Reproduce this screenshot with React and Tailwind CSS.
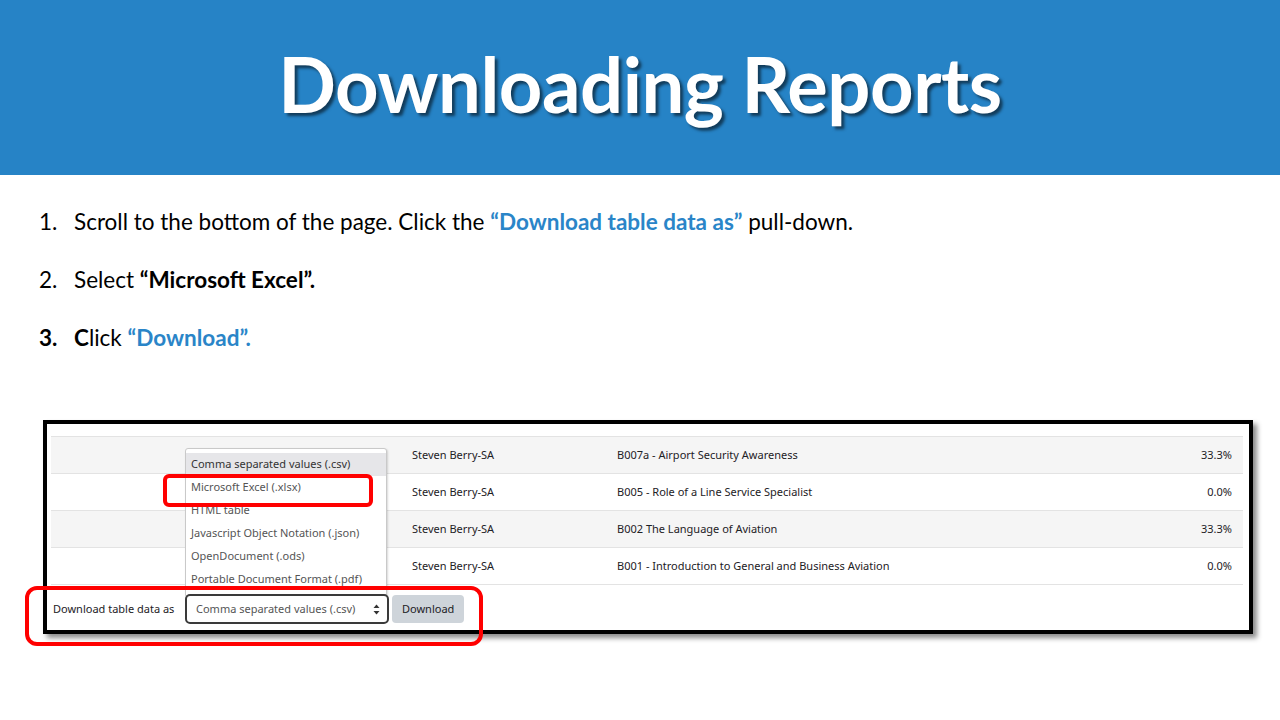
import React from "react";

const rows = [
  { name: "Steven Berry-SA", course: "B007a - Airport Security Awareness", pct: "33.3%", bg: "bg-[#f5f5f5]" },
  { name: "Steven Berry-SA", course: "B005 - Role of a Line Service Specialist", pct: "0.0%", bg: "bg-white" },
  { name: "Steven Berry-SA", course: "B002 The Language of Aviation", pct: "33.3%", bg: "bg-[#f5f5f5]" },
  { name: "Steven Berry-SA", course: "B001 - Introduction to General and Business Aviation", pct: "0.0%", bg: "bg-white" },
];

const options = [
  "Comma separated values (.csv)",
  "Microsoft Excel (.xlsx)",
  "HTML table",
  "Javascript Object Notation (.json)",
  "OpenDocument (.ods)",
  "Portable Document Format (.pdf)",
];

export default function App() {
  return (
    <div className="relative w-[1280px] h-[720px] overflow-hidden bg-white font-['Lato',sans-serif]">
      <header className="h-[175px] bg-[#2683c6] flex items-center justify-center">
        <h1 className="text-white font-bold text-[76px] leading-none tracking-[-0.5px] pb-[8px] [text-shadow:3px_3px_3px_rgba(0,0,0,0.55)]">
          Downloading Reports
        </h1>
      </header>

      <ol className="pt-[33px] pl-[39px] text-[22.5px] text-black leading-[28px] flex flex-col gap-[30px]">
        <li className="flex">
          <span className="w-[35px]">1.</span>
          <span>
            Scroll to the bottom of the page. Click the{" "}
            <b className="text-[#2a85c8] font-bold">“Download table data as”</b> pull-down.
          </span>
        </li>
        <li className="flex">
          <span className="w-[35px]">2.</span>
          <span>
            Select <b className="font-bold">“Microsoft Excel”.</b>
          </span>
        </li>
        <li className="flex">
          <span className="w-[35px] font-bold">3.</span>
          <span>
            <b className="font-bold">C</b>lick <b className="text-[#2a85c8] font-bold">“Download”.</b>
          </span>
        </li>
      </ol>

      <div className="absolute left-[43px] top-[420px] w-[1210px] h-[214px] border-4 border-black bg-white shadow-[4px_4px_5px_rgba(0,0,0,0.45)] font-['Noto_Sans',sans-serif] text-[11px] text-[#1d2125]">
        <div className="flex flex-col h-full pl-[4px] pr-[6px]">
          <div className="h-[12px] shrink-0" />
          {rows.map((r, i) => (
            <div key={i} className={`h-[37px] shrink-0 border-t border-[#e3e3e3] ${r.bg} flex items-center`}>
              <div className="w-[361px] shrink-0" />
              <div className="w-[205px] shrink-0">{r.name}</div>
              <div className="flex-1">{r.course}</div>
              <div className="pr-[11px]">{r.pct}</div>
            </div>
          ))}
          <div className="flex-1 border-t border-[#e3e3e3] flex items-center pt-[3px]">
            <span className="ml-[2px] w-[132px] text-[#1d2125]">Download table data as</span>
            <div className="relative z-10 w-[204px] h-[30px] border-2 border-[#3a3a3a] rounded-[5px] bg-white flex items-center pl-[9px] pr-[7px] text-[#555]">
              <span className="flex-1">Comma separated values (.csv)</span>
              <svg width="7" height="11" viewBox="0 0 7 11" className="text-[#333]">
                <path d="M3.5 0.5 L6.5 4 L0.5 4 Z" fill="currentColor" />
                <path d="M3.5 10.5 L6.5 7 L0.5 7 Z" fill="currentColor" />
              </svg>
            </div>
            <button className="ml-[3px] h-[28px] px-[10px] rounded-[4px] bg-[#ced4da] text-[#1d2125]">Download</button>
          </div>
        </div>

        <div className="absolute left-[138px] top-[24px] w-[202px] h-[148px] bg-white border border-[#c9c9c9] rounded-t-[3px] shadow-[1px_1px_2px_rgba(0,0,0,0.15)] pt-[4px] text-[#555]">
          {options.map((o, i) => (
            <div
              key={o}
              className={`h-[23px] flex items-center pl-[5px] ${i === 0 ? "bg-[#e6e6e9] text-[#333]" : ""}`}
            >
              {o}
            </div>
          ))}
        </div>
      </div>

      <div className="absolute left-[163px] top-[474px] w-[210px] h-[33px] border-[4px] border-[#ff0000] rounded-[6px]" />
      <div className="absolute left-[25px] top-[586px] w-[458px] h-[60px] border-[4px] border-[#ff0000] rounded-[12px]" />
    </div>
  );
}
